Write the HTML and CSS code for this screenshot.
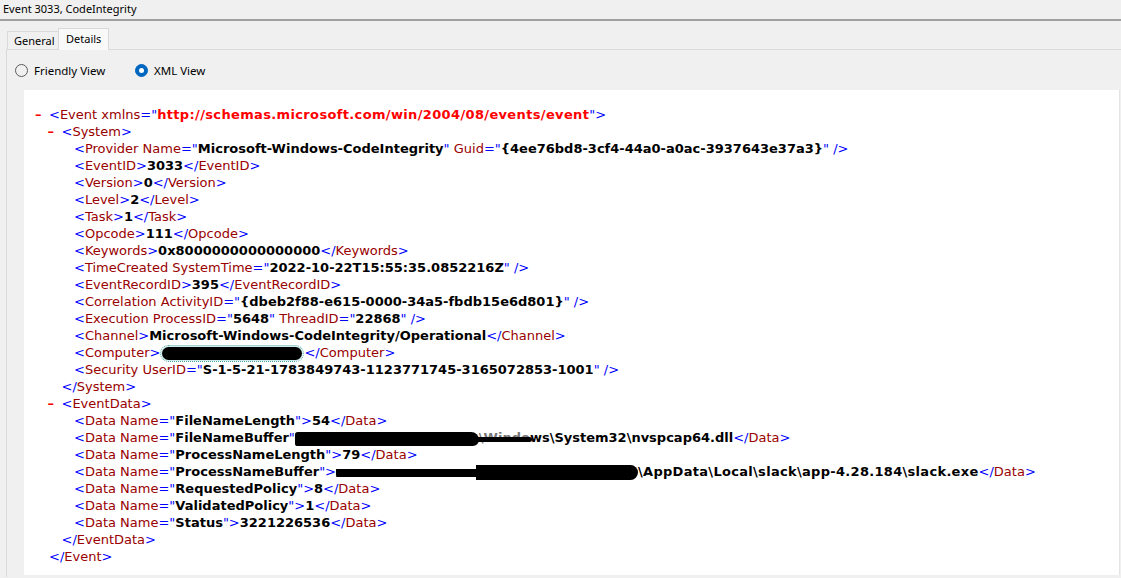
FILE: index.html
```html
<html>

<head>
	<meta charset="utf-8">
	<link rel="stylesheet" href="styles.css">
</head>

<body>

	<div class="titlebar">Event 3033, CodeIntegrity</div>

	<div class="tabs">
		<div class="tab">General</div>
		<div class="tab active">Details</div>
	</div>

	<div class="panel">

		<div class="views">
			<label class="radio"><span class="dot"></span>Friendly View</label>
			<label class="radio checked"><span class="dot"></span>XML View</label>
		</div>

		<div class="xml">
			<div class="el">
				<div class="ln"><span class="tg">–</span><span class="m">&lt;</span><span class="t">Event xmlns</span><span class="m">="</span><b class="ns">http://schemas.microsoft.com/win/2004/08/events/event</b><span class="m">"&gt;</span></div>
				<div class="kids">

					<div class="el">
						<div class="ln"><span class="tg">–</span><span class="m">&lt;</span><span class="t">System</span><span class="m">&gt;</span></div>
						<div class="kids">
							<div class="ln"><span class="m">&lt;</span><span class="t">Provider Name</span><span class="m">="</span><b>Microsoft-Windows-CodeIntegrity</b><span class="m">"</span><span class="t"> Guid</span><span class="m">="</span><b>{4ee76bd8-3cf4-44a0-a0ac-3937643e37a3}</b><span class="m">" /&gt;</span></div>
							<div class="ln"><span class="m">&lt;</span><span class="t">EventID</span><span class="m">&gt;</span><b>3033</b><span class="m">&lt;/</span><span class="t">EventID</span><span class="m">&gt;</span></div>
							<div class="ln"><span class="m">&lt;</span><span class="t">Version</span><span class="m">&gt;</span><b>0</b><span class="m">&lt;/</span><span class="t">Version</span><span class="m">&gt;</span></div>
							<div class="ln"><span class="m">&lt;</span><span class="t">Level</span><span class="m">&gt;</span><b>2</b><span class="m">&lt;/</span><span class="t">Level</span><span class="m">&gt;</span></div>
							<div class="ln"><span class="m">&lt;</span><span class="t">Task</span><span class="m">&gt;</span><b>1</b><span class="m">&lt;/</span><span class="t">Task</span><span class="m">&gt;</span></div>
							<div class="ln"><span class="m">&lt;</span><span class="t">Opcode</span><span class="m">&gt;</span><b>111</b><span class="m">&lt;/</span><span class="t">Opcode</span><span class="m">&gt;</span></div>
							<div class="ln"><span class="m">&lt;</span><span class="t">Keywords</span><span class="m">&gt;</span><b>0x8000000000000000</b><span class="m">&lt;/</span><span class="t">Keywords</span><span class="m">&gt;</span></div>
							<div class="ln"><span class="m">&lt;</span><span class="t">TimeCreated SystemTime</span><span class="m">="</span><b>2022-10-22T15:55:35.0852216Z</b><span class="m">" /&gt;</span></div>
							<div class="ln"><span class="m">&lt;</span><span class="t">EventRecordID</span><span class="m">&gt;</span><b>395</b><span class="m">&lt;/</span><span class="t">EventRecordID</span><span class="m">&gt;</span></div>
							<div class="ln"><span class="m">&lt;</span><span class="t">Correlation ActivityID</span><span class="m">="</span><b>{dbeb2f88-e615-0000-34a5-fbdb15e6d801}</b><span class="m">" /&gt;</span></div>
							<div class="ln"><span class="m">&lt;</span><span class="t">Execution ProcessID</span><span class="m">="</span><b>5648</b><span class="m">"</span><span class="t"> ThreadID</span><span class="m">="</span><b>22868</b><span class="m">" /&gt;</span></div>
							<div class="ln"><span class="m">&lt;</span><span class="t">Channel</span><span class="m">&gt;</span><b>Microsoft-Windows-CodeIntegrity/Operational</b><span class="m">&lt;/</span><span class="t">Channel</span><span class="m">&gt;</span></div>
							<div class="ln"><span class="m">&lt;</span><span class="t">Computer</span><span class="m">&gt;</span><span class="redact computer"></span><span class="m">&lt;/</span><span class="t">Computer</span><span class="m">&gt;</span></div>
							<div class="ln"><span class="m">&lt;</span><span class="t">Security UserID</span><span class="m">="</span><b>S-1-5-21-1783849743-1123771745-3165072853-1001</b><span class="m">" /&gt;</span></div>
						</div>
						<div class="ln"><span class="m">&lt;/</span><span class="t">System</span><span class="m">&gt;</span></div>
					</div>

					<div class="el">
						<div class="ln"><span class="tg">–</span><span class="m">&lt;</span><span class="t">EventData</span><span class="m">&gt;</span></div>
						<div class="kids">
							<div class="ln"><span class="m">&lt;</span><span class="t">Data Name</span><span class="m">="</span><b>FileNameLength</b><span class="m">"&gt;</span><b>54</b><span class="m">&lt;/</span><span class="t">Data</span><span class="m">&gt;</span></div>
							<div class="ln"><span class="m">&lt;</span><span class="t">Data Name</span><span class="m">="</span><b>FileNameBuffer</b><span class="m">"</span><span class="redact file"></span><b class="struck">\Windo</b><b>ws\System32\nvspcap64.dll</b><span class="m">&lt;/</span><span class="t">Data</span><span class="m">&gt;</span></div>
							<div class="ln"><span class="m">&lt;</span><span class="t">Data Name</span><span class="m">="</span><b>ProcessNameLength</b><span class="m">"&gt;</span><b>79</b><span class="m">&lt;/</span><span class="t">Data</span><span class="m">&gt;</span></div>
							<div class="ln"><span class="m">&lt;</span><span class="t">Data Name</span><span class="m">="</span><b>ProcessNameBuffer</b><span class="m">"&gt;</span><span class="redact process"></span><b class="wide">\AppData\Local\slack\app-4.28.184\slack.exe</b><span class="m">&lt;/</span><span class="t">Data</span><span class="m">&gt;</span></div>
							<div class="ln"><span class="m">&lt;</span><span class="t">Data Name</span><span class="m">="</span><b>RequestedPolicy</b><span class="m">"&gt;</span><b>8</b><span class="m">&lt;/</span><span class="t">Data</span><span class="m">&gt;</span></div>
							<div class="ln"><span class="m">&lt;</span><span class="t">Data Name</span><span class="m">="</span><b>ValidatedPolicy</b><span class="m">"&gt;</span><b>1</b><span class="m">&lt;/</span><span class="t">Data</span><span class="m">&gt;</span></div>
							<div class="ln"><span class="m">&lt;</span><span class="t">Data Name</span><span class="m">="</span><b>Status</b><span class="m">"&gt;</span><b>3221226536</b><span class="m">&lt;/</span><span class="t">Data</span><span class="m">&gt;</span></div>
						</div>
						<div class="ln"><span class="m">&lt;/</span><span class="t">EventData</span><span class="m">&gt;</span></div>
					</div>

				</div>
				<div class="ln"><span class="m">&lt;/</span><span class="t">Event</span><span class="m">&gt;</span></div>
			</div>
		</div>

	</div>

</body>

</html>
```

FILE: styles.css
```css
* {
	box-sizing: border-box;
}

html,
body {
	margin: 0;
	padding: 0;
	background: #f0f0f0;
	font-family: "Segoe UI", "Noto Sans", Arial, sans-serif;
	font-size: 11px;
	color: #000;
	height: 100%;
	overflow: hidden;
}

.titlebar {
	height: 21px;
	line-height: 18px;
	padding-left: 3px;
	border-bottom: 2px solid #a0a0a0;
}

.tabs {
	display: flex;
	align-items: flex-end;
	height: 28px;
	padding-left: 7px;
}

.tab {
	width: 51px;
	height: 18px;
	line-height: 18px;
	padding-left: 6px;
	border: 1px solid #dadada;
	border-bottom: none;
	border-right: none;
}

.tab.active {
	width: 51px;
	height: 22px;
	line-height: 20px;
	padding-left: 7px;
	background: #f9f9f9;
	border-right: 1px solid #dadada;
	margin-bottom: -1px;
	position: relative;
}

.panel {
	margin-left: 6px;
	border-left: 1px solid #dadada;
	border-top: 1px solid #dadada;
	padding-left: 17px;
	height: 528px;
}

.views {
	display: flex;
	align-items: center;
	height: 40px;
	margin-left: -9px;
	font-size: 11.5px;
}

.radio {
	display: flex;
	align-items: center;
	width: 120px;
}

.radio .dot {
	width: 13px;
	height: 13px;
	border-radius: 50%;
	border: 1px solid #5c5c5c;
	margin-right: 6px;
	position: relative;
}

.radio.checked .dot {
	background: #0067c0;
	border-color: #0067c0;
}

.radio.checked .dot::after {
	content: "";
	position: absolute;
	left: 3px;
	top: 3px;
	width: 5px;
	height: 5px;
	border-radius: 50%;
	background: #fff;
}

.xml {
	background: #fff;
	height: 485px;
	margin-right: 1px;
	padding: 16px 0 0 25px;
	font-family: "DejaVu Sans", Verdana, sans-serif;
	font-size: 13px;
	line-height: 17px;
	white-space: nowrap;
	border-right: 1px solid #e4e4e4;
}

.kids {
	padding-left: 12.5px;
}

.ln {
	height: 17px;
}

.tg {
	display: inline-block;
	width: 14px;
	margin-left: -14px;
	color: #ff0000;
	font-weight: bold;
}

.m {
	color: #0000ff;
}

.t {
	color: #990000;
}

b {
	font-weight: bold;
}

.ns {
	color: #ff0000;
	letter-spacing: 0.35px;
}

.wide {
	letter-spacing: 0.3px;
}

.redact {
	display: inline-block;
	background: #000;
	height: 14px;
	vertical-align: middle;
	border-radius: 7px;
}

.computer {
	width: 140px;
	height: 13px;
	margin: 0 2px;
	outline: 1px dotted #4aa3a3;
	outline-offset: 1px;
	box-shadow: 0 0 0 1px #cfeaea;
}

.file {
	width: 184px;
	border-radius: 3px 9px 7px 3px;
}

.struck {
	position: relative;
	color: #777;
}

.struck::after {
	content: "";
	position: absolute;
	left: -4px;
	right: -2px;
	top: 7px;
	height: 5px;
	border-radius: 3px;
	background: #000;
}

.process {
	width: 302px;
	height: 15px;
	border-radius: 3px 9px 9px 6px;
	background: linear-gradient(#000, #000) 0 4px / 140px 8px no-repeat, linear-gradient(#000, #000) 140px 0 / 162px 15px no-repeat;
	background-color: transparent;
}
```
